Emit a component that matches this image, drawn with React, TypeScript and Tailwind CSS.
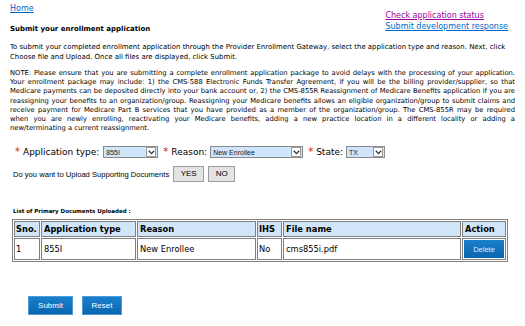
import React from "react";

const Chevron = () => (
  <span className="flex h-[10px] w-[10px] items-center justify-center border border-[#9a9a9a] bg-white">
    <svg width="7" height="5" viewBox="0 0 7 5">
      <path d="M0.8 0.8 L3.5 3.6 L6.2 0.8" fill="none" stroke="#333" strokeWidth="1.3" />
    </svg>
  </span>
);

const Select = ({ value, w }: { value: string; w: string }) => (
  <span
    className={`flex h-[12px] items-center justify-between border border-[#8a8a8a] bg-[#cfe5fc] pl-[2px] pr-[1px] ${w}`}
  >
    <span className="font-['Liberation_Sans',sans-serif] text-[7px] leading-none text-[#222]">{value}</span>
    <Chevron />
  </span>
);

const Star = () => <span className="text-[10px] leading-none text-[#e01010]">*</span>;

const noteLines = [
  "NOTE: Please ensure that you are submitting a complete enrollment application package to avoid delays with the processing of your application.",
  "Your enrollment package may include: 1) the CMS-588 Electronic Funds Transfer Agreement, if you will be the billing provider/supplier, so that",
  "Medicare payments can be deposited directly into your bank account or, 2) the CMS-855R Reassignment of Medicare Benefits application if you are",
  "reassigning your benefits to an organization/group. Reassigning your Medicare benefits allows an eligible organization/group to submit claims and",
  "receive payment for Medicare Part B services that you have provided as a member of the organization/group. The CMS-855R may be required",
  "when you are newly enrolling, reactivating your Medicare benefits, adding a new practice location in a different locality or adding a",
];

export default function App() {
  const v = "font-['DejaVu_Sans',sans-serif]";
  return (
    <div className={`h-[326px] w-[525px] overflow-hidden bg-white px-[10px] text-black ${v}`}>
      <div className="flex justify-between">
        <div className="flex flex-col">
          <a className="mt-[4px] text-[8px] leading-[10px] text-[#0066cc] underline">Home</a>
          <div className="mt-[10px] text-[7px] font-bold leading-[10px]">Submit your enrollment application</div>
        </div>
        <div className="mr-[7px] mt-[10px] flex flex-col text-[8px] leading-[11px]">
          <a className="text-[#9b009b] underline">Check application status</a>
          <a className="text-[#0066cc] underline">Submit development response</a>
        </div>
      </div>
      <p className="mt-[8px] text-[6.95px] leading-[10px]">
        To submit your completed enrollment application through the Provider Enrollment Gateway, select the application type and reason. Next, click Choose file and Upload. Once all files are displayed, click Submit.
      </p>
      <div className="mt-[7px] text-[6.78px] leading-[9.2px]">
        {noteLines.map((l, i) => (
          <div key={i} className="whitespace-nowrap text-justify [text-align-last:justify]">
            {l}
          </div>
        ))}
        <div>new/terminating a current reassignment.</div>
      </div>
      <div className="mt-[13px] flex items-center pl-[5px] text-[9px] leading-none">
        <Star />
        <span className="ml-[3px] mr-[4px]">Application type:</span>
        <Select value="855I" w="w-[55px]" />
        <span className="ml-[5px]"><Star /></span>
        <span className="ml-[3px] mr-[3px]">Reason:</span>
        <Select value="New Enrollee" w="w-[93px]" />
        <span className="ml-[5px]"><Star /></span>
        <span className="ml-[3px] mr-[3px]">State:</span>
        <Select value="TX" w="w-[39px]" />
      </div>
      <div className="mt-[8px] flex items-center pl-[3px] font-['Liberation_Sans',sans-serif] text-[7.6px]">
        <span>Do you want to Upload Supporting Documents</span>
        <button className="ml-[4px] h-[16px] w-[31px] border border-[#9c9c9c] bg-[#e3e3e3] text-[8px] leading-none">YES</button>
        <button className="ml-[4px] h-[16px] w-[27px] border border-[#9c9c9c] bg-[#e3e3e3] text-[8px] leading-none">NO</button>
      </div>
      <div className="mt-[26px] pl-[3px] text-[5.5px] font-bold leading-[7px]">List of Primary Documents Uploaded :</div>
      <table className="mt-[4px] ml-[2px] w-[496px] border-separate border-spacing-[1px] border border-[#808080] text-[8.3px]">
        <thead>
          <tr className="h-[16px] bg-[#d0e5f8] font-bold">
            <td className="w-[26px] border border-[#808080] px-[1px] leading-none">Sno.</td>
            <td className="w-[95px] border border-[#808080] px-[2px] leading-none">Application type</td>
            <td className="w-[119px] border border-[#808080] px-[2px] leading-none">Reason</td>
            <td className="w-[25px] border border-[#808080] px-[1px] leading-none">IHS</td>
            <td className="w-[178px] border border-[#808080] px-[2px] leading-none">File name</td>
            <td className="border border-[#808080] px-[2px] leading-none">Action</td>
          </tr>
        </thead>
        <tbody>
          <tr className="h-[20px]">
            <td className="border border-[#808080] px-[1px] leading-none">1</td>
            <td className="border border-[#808080] px-[2px] leading-none">855I</td>
            <td className="border border-[#808080] px-[2px] leading-none">New Enrollee</td>
            <td className="border border-[#808080] px-[1px] leading-none">No</td>
            <td className="border border-[#808080] px-[2px] leading-none">cms855i.pdf</td>
            <td className="border border-[#808080] p-[1px] leading-none">
              <button className="h-[18px] w-full bg-gradient-to-b from-[#1a80cc] to-[#0a66b0] font-['Liberation_Sans',sans-serif] text-[7.5px] text-[#dcecff]">Delete</button>
            </td>
          </tr>
        </tbody>
      </table>
      <div className="mt-[34px] flex gap-[9px] pl-[18px] font-['Liberation_Sans',sans-serif]">
        <button className="h-[19px] w-[45px] border border-[#4c9ad6] bg-gradient-to-b from-[#1a80cc] to-[#0a66b0] text-[8px] text-white">Submit</button>
        <button className="h-[19px] w-[40px] border border-[#4c9ad6] bg-gradient-to-b from-[#1a80cc] to-[#0a66b0] text-[8px] text-white">Reset</button>
      </div>
    </div>
  );
}
